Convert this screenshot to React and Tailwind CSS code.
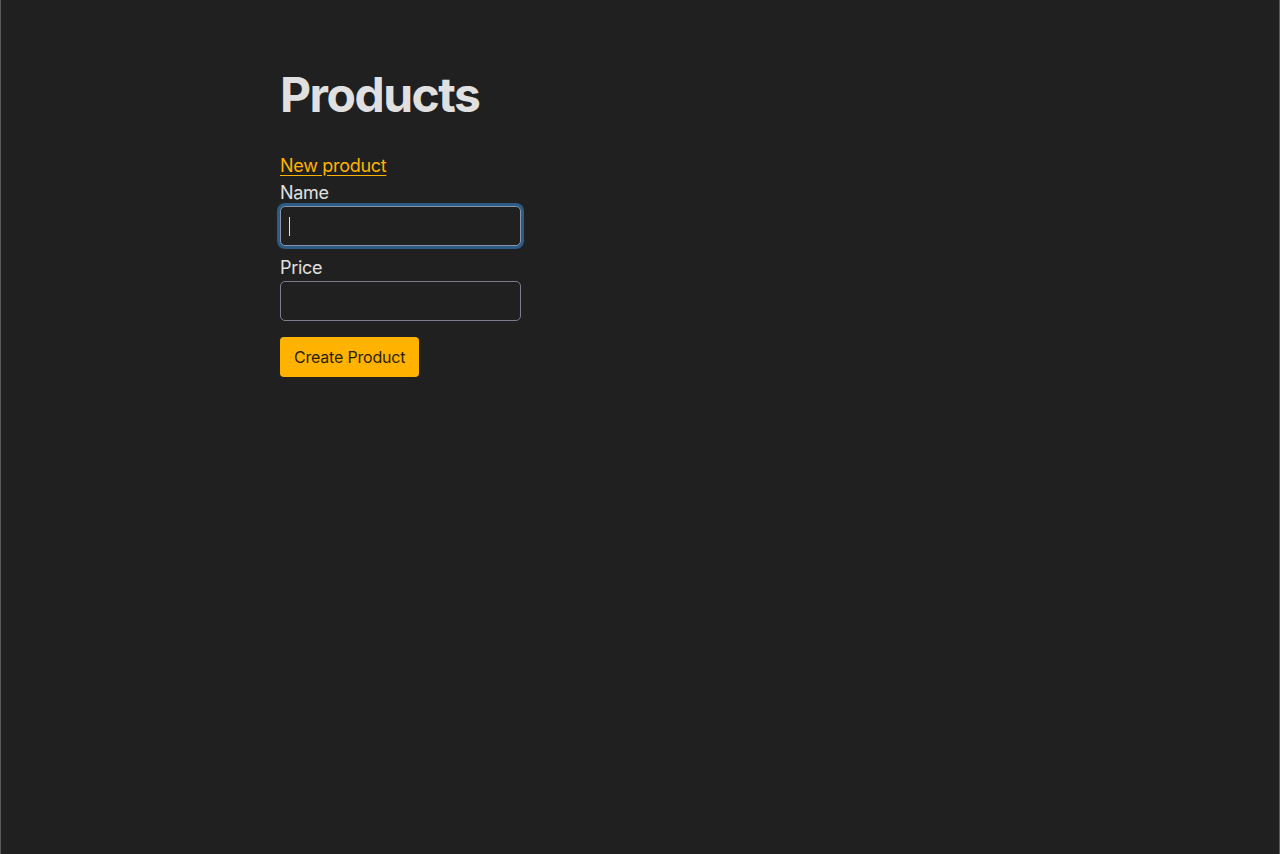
import React from 'react';

// formular za novi proizvod
function App() {
  const [product, setProduct] = React.useState({ name: '', price: '' });

  return (
    <div className="min-h-screen w-full bg-[#202020] border-x border-[#5a5a5a] font-['Inter','Noto_Sans',sans-serif] text-[#e0e0e0]">
      <div className="mx-auto w-[720px] pt-[66px]">
        <h1 className="text-[48px] leading-[1.2] font-bold tracking-[-1.5px] mb-[28px]">Products</h1>

        <a href="#" className="block text-[18px] leading-[27px] tracking-[-0.3px] text-[#ffb300] underline underline-offset-[3px] w-max">
          New product
        </a>

        <form className="flex flex-col items-start" onSubmit={(e) => e.preventDefault()}>
          <label htmlFor="name" className="text-[18px] leading-[27px] tracking-[-0.3px]">Name</label>
          <div className="relative">
            <input
              id="name"
              type="text"
              value={product.name}
              onChange={(e) => setProduct({ ...product, name: e.target.value })}
              className="h-[40px] w-[241px] rounded-[5px] border border-[#8a93a8] bg-[#202020] px-2 text-[16px] text-[#e0e0e0] outline-none ring-[3px] ring-[#2c5b85] caret-[#e0e0e0]"
            />
            {/* kursor u polju */}
            {product.name === '' && (
              <span className="pointer-events-none absolute left-[9px] top-[11px] h-[19px] w-px bg-[#e0e0e0]" />
            )}
          </div>

          <label htmlFor="price" className="mt-[8px] text-[18px] leading-[27px] tracking-[-0.3px]">Price</label>
          <input
            id="price"
            type="text"
            value={product.price}
            onChange={(e) => setProduct({ ...product, price: e.target.value })}
            className="h-[40px] w-[241px] rounded-[5px] border border-[#7b7d8e] bg-[#202020] px-2 text-[16px] text-[#e0e0e0] outline-none"
          />

          <button
            type="submit"
            className="mt-4 h-[40px] rounded-[4px] bg-[#ffb300] px-[14px] text-[16px] tracking-[-0.2px] text-[#2a1f00]"
          >
            Create Product
          </button>
        </form>
      </div>
    </div>
  );
}

export default App;
